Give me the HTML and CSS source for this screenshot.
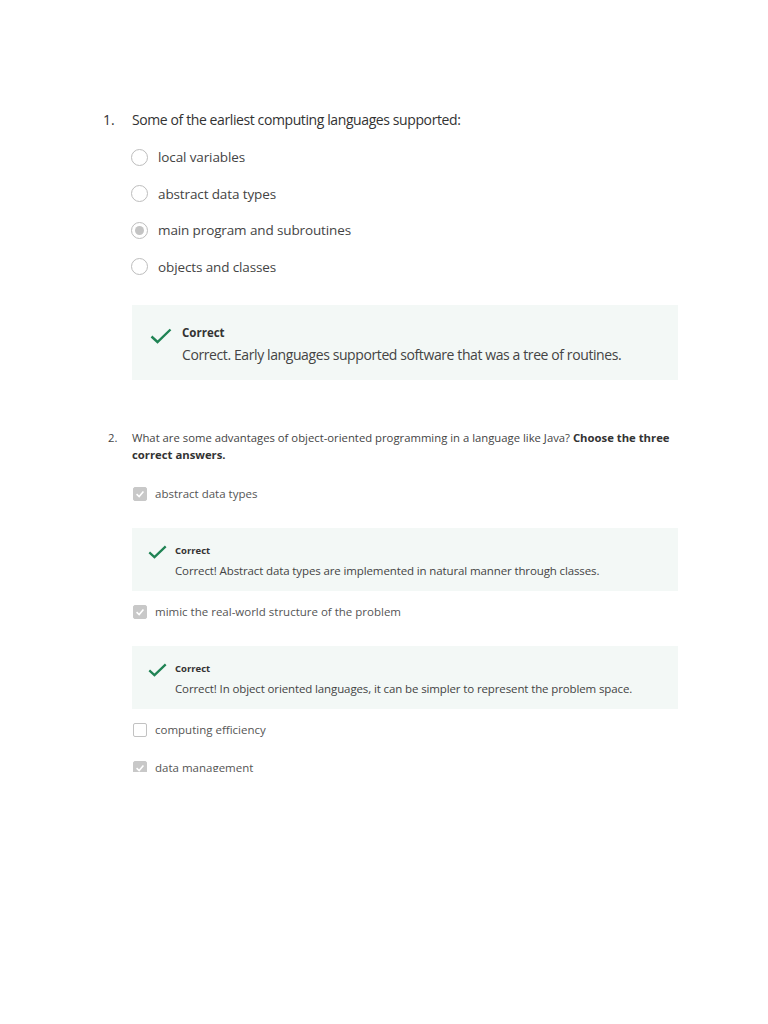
FILE: index.html
```html
<!DOCTYPE html>
<html lang="en">
<head>
    <meta charset="UTF-8">
    <title>Quiz review</title>
    <link rel="stylesheet" href="styles.css">
</head>
<body>
    <div class="hoja">
        <div class="pregunta p1">
            <div class="enunciado">
                <span class="num">1.</span>
                <span>Some of the earliest computing languages supported:</span>
            </div>
            <div class="opciones">
                <div class="opcion"><span class="radio"></span>local variables</div>
                <div class="opcion"><span class="radio"></span>abstract data types</div>
                <div class="opcion"><span class="radio marcado"></span>main program and subroutines</div>
                <div class="opcion"><span class="radio"></span>objects and classes</div>
            </div>
            <div class="feedback">
                <svg class="check" viewBox="0 0 22 16" width="22" height="16"><path d="M1.5 8.5 L7.5 14 L20.5 1.5" fill="none" stroke="#1f8354" stroke-width="2.4"/></svg>
                <div>
                    <div class="titulo">Correct</div>
                    <div class="texto">Correct. Early languages supported software that was a tree of routines.</div>
                </div>
            </div>
        </div>

        <div class="pregunta p2">
            <div class="enunciado">
                <span class="num">2.</span>
                <p>What are some advantages of object-oriented programming in a language like Java? <b>Choose the three correct answers.</b></p>
            </div>
            <div class="opciones">
                <div class="opcion"><span class="caja marcada"><svg viewBox="0 0 14 14" width="14" height="14"><path d="M3 7.2 L6 10 L11 4" fill="none" stroke="#fff" stroke-width="1.8"/></svg></span>abstract data types</div>
                <div class="feedback">
                    <svg class="check" viewBox="0 0 22 16" width="19" height="14"><path d="M1.5 8.5 L7.5 14 L20.5 1.5" fill="none" stroke="#1f8354" stroke-width="2.6"/></svg>
                    <div>
                        <div class="titulo">Correct</div>
                        <div class="texto">Correct! Abstract data types are implemented in natural manner through classes.</div>
                    </div>
                </div>
                <div class="opcion"><span class="caja marcada"><svg viewBox="0 0 14 14" width="14" height="14"><path d="M3 7.2 L6 10 L11 4" fill="none" stroke="#fff" stroke-width="1.8"/></svg></span>mimic the real-world structure of the problem</div>
                <div class="feedback">
                    <svg class="check" viewBox="0 0 22 16" width="19" height="14"><path d="M1.5 8.5 L7.5 14 L20.5 1.5" fill="none" stroke="#1f8354" stroke-width="2.6"/></svg>
                    <div>
                        <div class="titulo">Correct</div>
                        <div class="texto">Correct! In object oriented languages, it can be simpler to represent the problem space.</div>
                    </div>
                </div>
                <div class="opcion"><span class="caja"></span>computing efficiency</div>
                <div class="opcion"><span class="caja marcada"><svg viewBox="0 0 14 14" width="14" height="14"><path d="M3 7.2 L6 10 L11 4" fill="none" stroke="#fff" stroke-width="1.8"/></svg></span>data management</div>
            </div>
        </div>
    </div>
</body>
</html>
```

FILE: styles.css
```css
body {
    margin: 0;
    background: #fff;
    font-family: 'Open Sans', 'Noto Sans', sans-serif;
    color: #444;
}

.hoja {
    height: 772px;
    overflow: hidden;
    padding-top: 109px;
    box-sizing: border-box;
}

.enunciado {
    display: flex;
}

.enunciado p {
    margin: 0;
}

.num {
    flex: none;
}

.p1 .enunciado {
    padding-left: 103px;
    font-size: 14px;
    line-height: 22px;
    letter-spacing: -0.4px;
    color: #333;
}

.p1 .num {
    width: 29px;
    letter-spacing: 0;
}

.p1 .opciones {
    padding-left: 131px;
    margin-top: 15px;
}

.p1 .opcion {
    display: flex;
    align-items: center;
    height: 22px;
    margin-bottom: 14.5px;
    font-size: 13.5px;
    letter-spacing: -0.12px;
    color: #444;
}

.radio {
    width: 15px;
    height: 15px;
    border: 1.7px solid #bdbdbd;
    border-radius: 50%;
    margin-right: 10px;
    display: flex;
    justify-content: center;
    align-items: center;
}

.radio.marcado::after {
    content: '';
    width: 9px;
    height: 9px;
    border-radius: 50%;
    background: #c4c4c4;
}

.feedback {
    display: flex;
    background: #f3f8f6;
}

.p1 .feedback {
    margin: 27.5px 90px 0 132px;
    padding: 20px 18px 14px 18px;
}

.p1 .check {
    margin-right: 10px;
    margin-top: 3px;
}

.p1 .titulo {
    font-size: 11.5px;
    font-weight: 700;
    color: #333;
    line-height: 16px;
}

.p1 .texto {
    font-size: 14px;
    line-height: 22px;
    letter-spacing: -0.4px;
    margin-top: 3px;
}

.p2 {
    margin-top: 49px;
}

.p2 .enunciado {
    padding-left: 108px;
    padding-right: 90px;
    font-size: 11.3px;
    line-height: 17px;
    color: #444;
}

.p2 .enunciado b {
    color: #333;
}

.p2 .num {
    width: 24px;
}

.p2 .opciones {
    padding-left: 133px;
    padding-right: 90px;
    margin-top: 23px;
}

.p2 .opcion {
    display: flex;
    align-items: center;
    font-size: 11.5px;
    line-height: 16px;
    height: 16px;
    color: #555;
    margin-bottom: 22px;
}

.caja {
    width: 12px;
    height: 12px;
    border: 1px solid #c2c2c2;
    border-radius: 2px;
    margin-right: 8px;
    display: flex;
    justify-content: center;
    align-items: center;
    flex: none;
}

.caja.marcada {
    background: #c8c8c8;
    border-color: #c8c8c8;
}

.p2 .feedback {
    margin: 26px 0 13px -1px;
    padding: 16px 16px 12px 16px;
}

.p2 .check {
    margin-right: 8px;
    margin-top: 1px;
}

.p2 .titulo {
    font-size: 9.5px;
    font-weight: 700;
    color: #333;
    line-height: 13px;
}

.p2 .texto {
    font-size: 11.5px;
    line-height: 17px;
    letter-spacing: -0.12px;
    margin-top: 5px;
}
```
